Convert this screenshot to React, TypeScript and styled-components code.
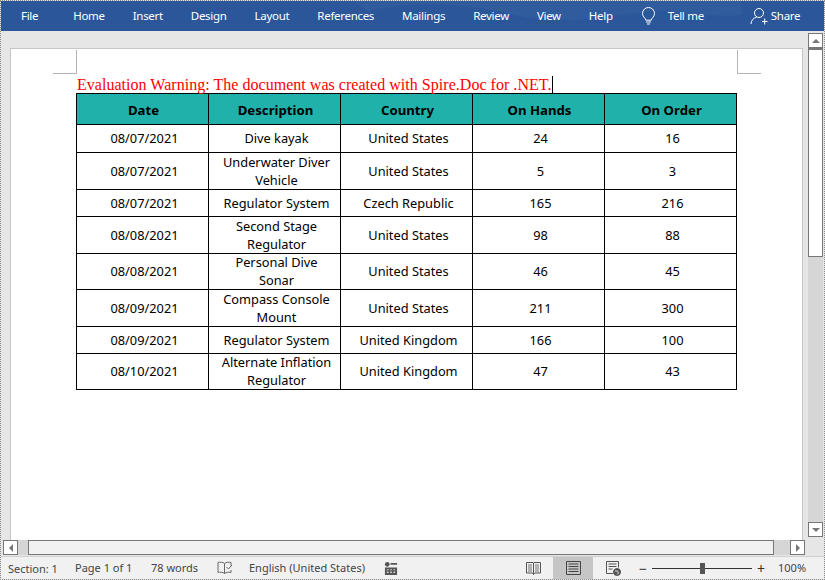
import React from "react";
import styled, {createGlobalStyle} from "styled-components";

const GlobalStyle = createGlobalStyle`
    html, body {
        margin: 0;
        padding: 0;
        background: #e6e6e6;
    }
`;

const ui = `"Noto Sans", "Open Sans", sans-serif`;

const tabs = ["Home", "Insert", "Design", "Layout", "References", "Mailings", "Review", "View", "Help"];

const rows = [
    ["08/07/2021", "Dive kayak", "United States", "24", "16", 28],
    ["08/07/2021", "Underwater Diver Vehicle", "United States", "5", "3", 37],
    ["08/07/2021", "Regulator System", "Czech Republic", "165", "216", 27],
    ["08/08/2021", "Second Stage Regulator", "United States", "98", "88", 37],
    ["08/08/2021", "Personal Dive Sonar", "United States", "46", "45", 36],
    ["08/09/2021", "Compass Console Mount", "United States", "211", "300", 37],
    ["08/09/2021", "Regulator System", "United Kingdom", "166", "100", 27],
    ["08/10/2021", "Alternate Inflation Regulator", "United Kingdom", "47", "43", 36],
] as const;

const Bulb = () => (
    <svg width="15" height="19" viewBox="0 0 15 19" fill="none" stroke="#fff" strokeWidth="1">
        <path d="M4.8 13.2C4.5 11 1.5 9.8 1.5 6.5a6 6 0 0 1 12 0c0 3.3-3 4.500-3.300 6.700z"/>
        <path d="M5 15h5M6 17h3"/>
    </svg>
);

const Person = () => (
    <svg width="18" height="18" viewBox="0 0 18 18" fill="none" stroke="#fff" strokeWidth="1">
        <circle cx="9" cy="6" r="4.500"/>
        <path d="M1 17c0-3.500 2.500-6 5.500-6.800M12 14.500h5.500M14.700 11.500v6"/>
    </svg>
);

const BookCheck = () => (
    <svg width="16" height="15" viewBox="0 0 16 15" fill="none" stroke="#666" strokeWidth="1">
        <path d="M7.500 2.500C6 1 3 1 1 1.500v10c2-.5 5-.5 6.500 1v-10zM7.500 2.500C9 1 12 1 14 1.500v3M14 9v2.500c-2-.5-4.500-.5-6.500 1"/>
        <path d="M9.500 6l2 2 3.500-4"/>
    </svg>
);

const Macro = () => (
    <svg width="15" height="15" viewBox="0 0 15 15">
        <circle cx="3.500" cy="3" r="2.500" fill="#555"/>
        <path d="M7 1.500h7v2H7zM1 6.500h13v8H1z" fill="#555"/>
        <path d="M3 8.500h2v1H3zM6.500 8.500h2v1h-2zM10 8.500h2v1h-2zM3 11h2v1H3zM6.500 11h2v1h-2zM10 11h2v1h-2z" fill="#fff"/>
    </svg>
);

const ReadMode = () => (
    <svg width="15" height="15" viewBox="0 0 15 15" fill="none" stroke="#555" strokeWidth="1">
        <path d="M.5 1.500h6.500l.5.500.5-.5h6.500v10.500h-6l-1 1.500-1-1.500h-6zM7.500 2v11.500"/>
        <path d="M2 4h4M2 6h4M2 8h4M2 10h4M9 4h4M9 6h4M9 8h4M9 10h4" strokeWidth="0.800"/>
    </svg>
);

const PrintLayout = () => (
    <svg width="15" height="14" viewBox="0 0 15 14" fill="none" stroke="#444" strokeWidth="1">
        <path d="M.5.500h14v13H.5z"/>
        <path d="M2.500 3h10M2.500 5.500h10M2.500 8h10M2.500 10.500h10"/>
    </svg>
);

const WebLayout = () => (
    <svg width="15" height="15" viewBox="0 0 15 15" fill="none" stroke="#555" strokeWidth="1">
        <path d="M7 12.500H.5V.5h12v6"/>
        <path d="M2.500 3h8M2.500 5.500h8M2.500 8h4"/>
        <circle cx="11" cy="11" r="3.500" fill="#555"/>
        <path d="M9 10h2.500l1 2-1.500 1.500" stroke="#fff" strokeWidth="0.800"/>
    </svg>
);

export default function App() {
    return (
        <Window>
            <GlobalStyle/>
            <Ribbon>
                <Waves viewBox="0 0 300 31" preserveAspectRatio="none">
                    <path d="M20 10C60-2 100 4 130 14s60 4 90-2 50 6 80 2V0H10z" fill="#3a64a4" opacity="0.35"/>
                </Waves>
                <FileTab>File</FileTab>
                {tabs.map(t => <Tab key={t}>{t}</Tab>)}
                <BulbSlot><Bulb/></BulbSlot>
                <Tab>Tell me</Tab>
                <ShareButton><Person/>Share</ShareButton>
            </Ribbon>
            <Middle>
                <DocArea>
                    <Page>
                        <CropMark $side="left"/>
                        <CropMark $side="right"/>
                        <Warning>Evaluation Warning: The document was created with Spire.Doc for .NET.<Caret/></Warning>
                        <Table>
                            <thead>
                            <Row $h={31}>
                                <HeadCell>Date</HeadCell>
                                <HeadCell>Description</HeadCell>
                                <HeadCell>Country</HeadCell>
                                <HeadCell>On Hands</HeadCell>
                                <HeadCell>On Order</HeadCell>
                            </Row>
                            </thead>
                            <tbody>
                            {rows.map((r, i) => (
                                <Row key={i} $h={r[5]}>
                                    {r.slice(0, 5).map((text, c) => (
                                        <Cell key={c}><CellText>{text}</CellText></Cell>
                                    ))}
                                </Row>
                            ))}
                            </tbody>
                        </Table>
                    </Page>
                </DocArea>
                <VScroll>
                    <ScrollButton><ArrowUp/></ScrollButton>
                    <VThumb/>
                    <VTrack/>
                    <ScrollButton><ArrowDown/></ScrollButton>
                </VScroll>
            </Middle>
            <HScroll>
                <ScrollButton><ArrowLeft/></ScrollButton>
                <HGap $w={10}/>
                <HThumb/>
                <HGap $w={16}/>
                <ScrollButton><ArrowRight/></ScrollButton>
            </HScroll>
            <StatusBar>
                <SectionText>Section: 1</SectionText>
                <StatusText $w={76}>Page 1 of 1</StatusText>
                <StatusText $w={66}>78 words</StatusText>
                <StatusIcon $w={32}><BookCheck/></StatusIcon>
                <StatusText $w={135}>English (United States)</StatusText>
                <StatusIcon $w={14}><Macro/></StatusIcon>
                <Spacer/>
                <ViewButton><ReadMode/></ViewButton>
                <ViewButton $active><PrintLayout/></ViewButton>
                <ViewButton><WebLayout/></ViewButton>
                <ZoomOut>−</ZoomOut>
                <Slider><SliderThumb/></Slider>
                <ZoomSign>+</ZoomSign>
                <ZoomValue>100%</ZoomValue>
            </StatusBar>
        </Window>
    );
}

const Window = styled.div`
    width: 825px;
    height: 580px;
    box-sizing: border-box;
    border: 1px dotted #8a8a8a;
    display: flex;
    flex-direction: column;
    overflow: hidden;
    background: #e6e6e6;
    font-family: ${ui};
`;

const Ribbon = styled.div`
    position: relative;
    height: 30px;
    flex: none;
    display: flex;
    align-items: center;
    gap: 28px;
    padding-left: 20px;
    background: #2b579a;
    color: #fff;
`;

const Waves = styled.svg`
    position: absolute;
    top: 0;
    left: 340px;
    width: 400px;
    height: 31px;
`;

const Tab = styled.span`
    position: relative;
    font-size: 11.5px;
    line-height: 16px;
    letter-spacing: -0.3px;
    white-space: nowrap;
`;

const FileTab = styled(Tab)`
    margin-right: 7px;
`;

const BulbSlot = styled.span`
    position: relative;
    display: flex;
    margin-right: -16px;
`;

const ShareButton = styled(Tab)`
    display: flex;
    align-items: center;
    gap: 3px;
    margin-left: 18px;
`;

const Middle = styled.div`
    flex: 1;
    min-height: 0;
    display: flex;
`;

const DocArea = styled.div`
    flex: 1;
    min-width: 0;
    padding: 17px 5px 0 9px;
    overflow: hidden;
`;

const Page = styled.div`
    position: relative;
    height: 100%;
    box-sizing: border-box;
    background: #fff;
    border: 1px solid #c6c6c6;
    border-bottom: none;
    padding: 27px 0 0 65px;
`;

const CropMark = styled.div<{ $side: "left" | "right" }>`
    position: absolute;
    top: 1px;
    width: 23px;
    height: 23px;
    border-bottom: 1px solid #b4b4b4;
    ${p => p.$side === "left"
        ? "left: 42px; border-right: 1px solid #b4b4b4;"
        : "right: 41px; border-left: 1px solid #b4b4b4;"}
`;

const Warning = styled.div`
    height: 17px;
    padding-left: 1px;
    font-family: "Liberation Serif", serif;
    font-size: 16px;
    line-height: 18px;
    letter-spacing: 0.03px;
    color: #ff0000;
    white-space: nowrap;
`;

const Caret = styled.span`
    display: inline-block;
    width: 1px;
    height: 18px;
    margin-left: 1px;
    vertical-align: top;
    background: #000;
`;

const Table = styled.table`
    width: 661px;
    table-layout: fixed;
    border-collapse: collapse;
    font-family: ${ui};
    color: #000;
`;

const HeadCell = styled.th`
    padding: 2px 0 0 2px;
    background: #20b2aa;
    border: 1px solid #000;
    font-size: 13.2px;
    line-height: 18px;
    font-weight: 700;
    text-align: center;
`;

const Row = styled.tr<{ $h: number }>`
    height: ${p => p.$h}px;
`;

const Cell = styled.td`
    padding: 0 8px 1px 12px;
    border: 1px solid #000;
    text-align: center;
`;

const CellText = styled.div`
    margin: -1px 0;
    font-size: 12.8px;
    line-height: 18px;
`;

const VScroll = styled.div`
    width: 15px;
    margin: 2px 1px 3px 0;
    flex: none;
    display: flex;
    flex-direction: column;
`;

const ScrollButton = styled.div`
    width: 13px;
    height: 13px;
    flex: none;
    display: flex;
    align-items: center;
    justify-content: center;
    background: #fff;
    border: 1px solid #777;
`;

const VThumb = styled.div`
    height: 209px;
    flex: none;
    box-sizing: border-box;
    background: #fff;
    border: 1px solid #777;
    border-top-width: 2px;
`;

const VTrack = styled.div`
    flex: 1;
    background: #d6d6d6;
`;

const ArrowUp = styled.span`
    border: 4px solid transparent;
    border-top: none;
    border-bottom: 4px solid #777;
`;

const ArrowDown = styled.span`
    border: 4px solid transparent;
    border-bottom: none;
    border-top: 4px solid #777;
`;

const ArrowLeft = styled.span`
    border: 4px solid transparent;
    border-left: none;
    border-right: 4px solid #777;
`;

const ArrowRight = styled.span`
    border: 4px solid transparent;
    border-right: none;
    border-left: 4px solid #777;
`;

const HScroll = styled.div`
    height: 15px;
    flex: none;
    box-sizing: border-box;
    display: flex;
    padding-left: 2px;
    width: 804px;
`;

const HGap = styled.div<{ $w: number }>`
    width: ${p => p.$w}px;
    flex: none;
    background: #d6d6d6;
`;

const HThumb = styled.div`
    flex: 1;
    box-sizing: border-box;
    background: #f1f1f1;
    border: 1px solid #777;
`;

const StatusBar = styled.div`
    height: 23px;
    flex: none;
    box-sizing: border-box;
    display: flex;
    align-items: center;
    padding: 0 19px 0 7px;
    margin-top: 1px;
    background: #f1f1f1;
    border-top: 1px solid #d0d0d0;
    color: #444;
`;

const StatusText = styled.span<{ $w: number }>`
    width: ${p => p.$w}px;
    flex: none;
    margin-bottom: 2px;
    font-size: 11px;
    white-space: nowrap;
`;

const SectionText = styled.span`
    width: 67px;
    flex: none;
    font-size: 11px;
    white-space: nowrap;
`;

const StatusIcon = styled.span<{ $w: number }>`
    width: ${p => p.$w}px;
    flex: none;
    display: flex;
`;

const Spacer = styled.div`
    flex: 1;
`;

const ViewButton = styled.div<{ $active?: boolean }>`
    width: 40px;
    height: 100%;
    flex: none;
    display: flex;
    align-items: center;
    justify-content: center;
    background: ${p => p.$active ? "#c6c6c6" : "transparent"};
`;

const ZoomSign = styled.span`
    width: 12px;
    flex: none;
    font-size: 14px;
    text-align: center;
    color: #333;
`;

const ZoomOut = styled(ZoomSign)`
    margin-left: 4px;
`;

const Slider = styled.div`
    position: relative;
    width: 100px;
    height: 1px;
    flex: none;
    margin: 0 3px;
    background: #333;
`;

const SliderThumb = styled.div`
    position: absolute;
    left: 48px;
    top: -5px;
    width: 5px;
    height: 11px;
    background: #555;
`;

const ZoomValue = styled.span`
    width: 38px;
    flex: none;
    box-sizing: border-box;
    padding-left: 11px;
    margin-bottom: 2px;
    font-size: 11px;
`;
